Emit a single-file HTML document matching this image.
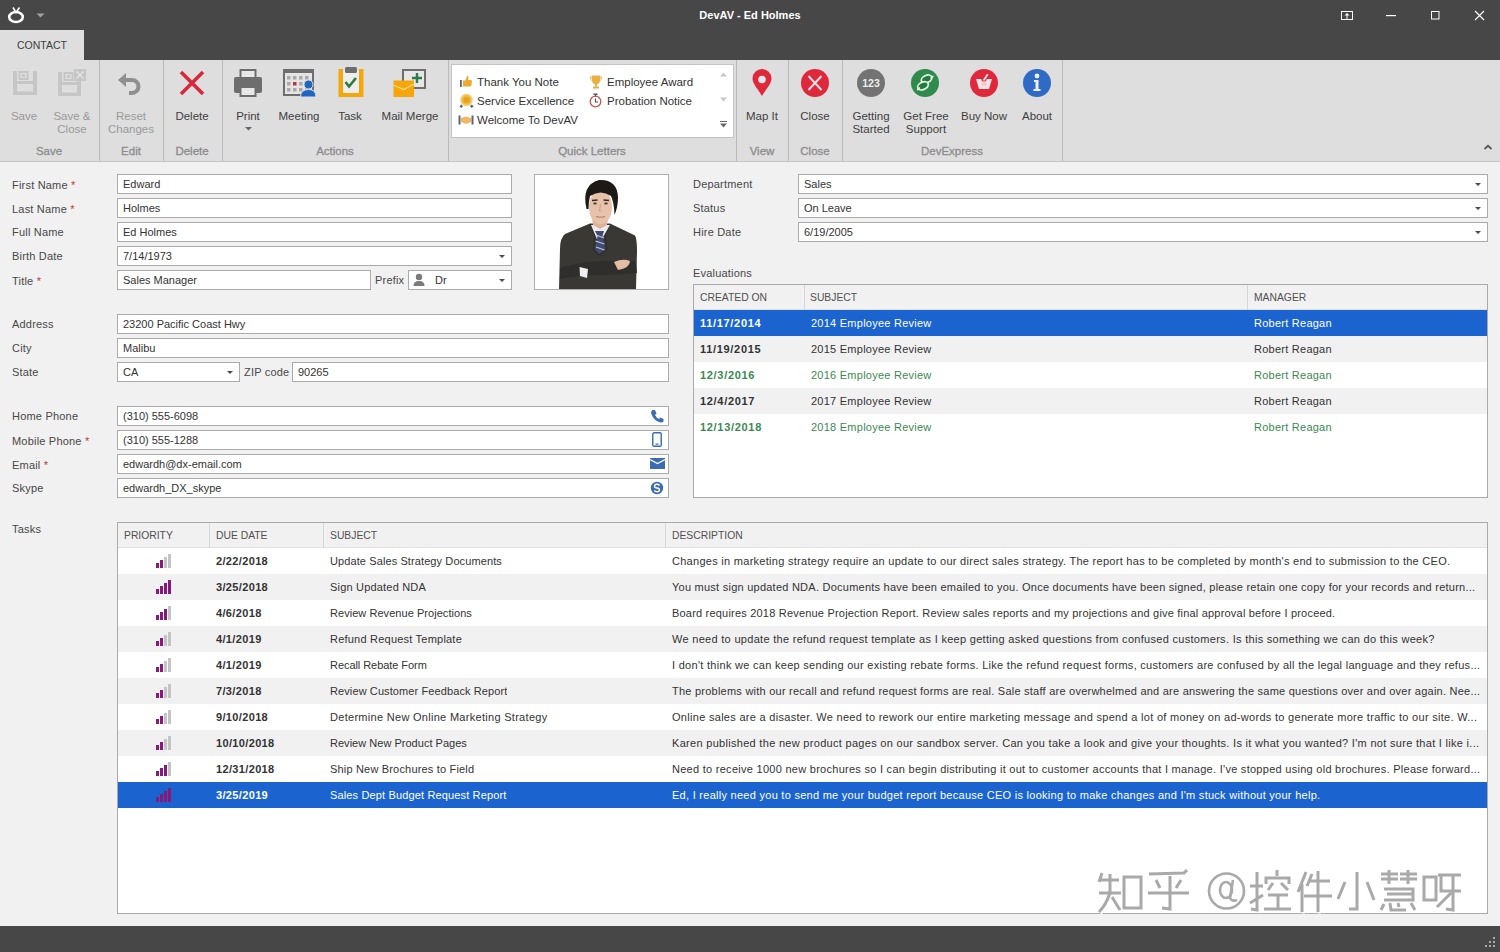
<!DOCTYPE html><html><head><meta charset="utf-8"><style>
*{margin:0;padding:0;box-sizing:border-box}
html,body{width:1500px;height:952px;overflow:hidden;background:#f1f1f1}
body{font-family:"Liberation Sans",sans-serif;font-size:11px;color:#333;position:relative}
.ab{position:absolute}
.t{position:absolute;white-space:nowrap;line-height:14px}
#title{left:0;top:0;width:1500px;height:30px;background:#474747}
#tabrow{left:0;top:30px;width:1500px;height:30px;background:#474747}
#tab{left:0;top:30px;width:84px;height:31px;background:#dedede}
#ribbon{left:0;top:60px;width:1500px;height:102px;background:#dedede;border-bottom:1px solid #c4c4c4}
.sep{position:absolute;top:60px;width:1px;height:101px;background:#bababa}
.rl{position:absolute;white-space:nowrap;line-height:13px;text-align:center;color:#404040;font-size:11.5px}
.rl.dis{color:#9a9a9a}
.gl{position:absolute;top:144px;white-space:nowrap;text-align:center;color:#8c8c8c;font-size:11.5px;line-height:14px;-webkit-text-stroke:0.3px #8c8c8c}
.fld{position:absolute;height:20px;background:#fff;border:1px solid #ababab}
.fld span{position:absolute;left:5px;top:2px;line-height:14px;white-space:nowrap;color:#333}
.lbl{position:absolute;left:12px;line-height:14px;white-space:nowrap;color:#484848;letter-spacing:0.2px}
.req{color:#c0392b}
.arr{position:absolute;width:0;height:0;border-left:3.5px solid transparent;border-right:3.5px solid transparent;border-top:3.5px solid #4a4a4a}
.grid{position:absolute;background:#fff;border:1px solid #aaa;overflow:hidden}
.gh{position:absolute;left:0;top:0;height:25px;background:#f1f1f1;border-bottom:1px solid #e0e0e0}
.hc{position:absolute;top:0;height:25px;line-height:24px;color:#505050;white-space:nowrap;transform:scaleX(0.94);transform-origin:0 0}
.hsep{position:absolute;top:0;width:1px;height:25px;background:#d6d6d6}
.row{position:absolute;left:0;height:26px}
.c{position:absolute;top:0;line-height:26px;white-space:nowrap;overflow:hidden;text-overflow:ellipsis;color:#333}
.b{font-weight:bold;letter-spacing:0.35px}
.ls{letter-spacing:0.25px}
.ld{letter-spacing:0.31px}
</style></head><body>
<div id="title" class="ab"></div><div id="tabrow" class="ab"></div><div id="tab" class="ab"></div>
<div class="t" style="left:0;top:8px;width:1500px;text-align:center;color:#fff;font-weight:bold;font-size:11px">DevAV - Ed Holmes</div>
<div class="t" style="left:17px;top:38px;color:#404040;font-size:10.5px">CONTACT</div>
<div id="ribbon" class="ab"></div>
<div class="sep" style="left:99px"></div>
<div class="sep" style="left:163px"></div>
<div class="sep" style="left:222px"></div>
<div class="sep" style="left:448px"></div>
<div class="sep" style="left:736px"></div>
<div class="sep" style="left:788px"></div>
<div class="sep" style="left:842px"></div>
<div class="sep" style="left:1062px"></div>
<div class="rl dis" style="left:-16.0px;top:110px;width:80px">Save</div>
<div class="rl dis" style="left:32.0px;top:110px;width:80px">Save &amp;</div>
<div class="rl dis" style="left:32.0px;top:123px;width:80px">Close</div>
<div class="rl dis" style="left:91.0px;top:110px;width:80px">Reset</div>
<div class="rl dis" style="left:91.0px;top:123px;width:80px">Changes</div>
<div class="rl " style="left:152.0px;top:110px;width:80px">Delete</div>
<div class="rl " style="left:208.0px;top:110px;width:80px">Print</div>
<div class="rl " style="left:259.0px;top:110px;width:80px">Meeting</div>
<div class="rl " style="left:310.0px;top:110px;width:80px">Task</div>
<div class="rl " style="left:370.0px;top:110px;width:80px">Mail Merge</div>
<div class="rl " style="left:722.0px;top:110px;width:80px">Map It</div>
<div class="rl " style="left:775.0px;top:110px;width:80px">Close</div>
<div class="rl " style="left:831.0px;top:110px;width:80px">Getting</div>
<div class="rl " style="left:831.0px;top:123px;width:80px">Started</div>
<div class="rl " style="left:886.0px;top:110px;width:80px">Get Free</div>
<div class="rl " style="left:886.0px;top:123px;width:80px">Support</div>
<div class="rl " style="left:944.0px;top:110px;width:80px">Buy Now</div>
<div class="rl " style="left:997.0px;top:110px;width:80px">About</div>
<div class="gl" style="left:-11.0px;width:120px">Save</div>
<div class="gl" style="left:71.0px;width:120px">Edit</div>
<div class="gl" style="left:132.0px;width:120px">Delete</div>
<div class="gl" style="left:275.0px;width:120px">Actions</div>
<div class="gl" style="left:532.0px;width:120px">Quick Letters</div>
<div class="gl" style="left:702.0px;width:120px">View</div>
<div class="gl" style="left:755.0px;width:120px">Close</div>
<div class="gl" style="left:892.0px;width:120px">DevExpress</div>
<div class="ab" style="left:451px;top:64px;width:283px;height:74px;background:#fff;border:1px solid #c4c4c4"></div>
<div class="t" style="left:477px;top:75px;color:#333;font-size:11.5px">Thank You Note</div>
<div class="t" style="left:477px;top:94px;color:#333;font-size:11.5px">Service Excellence</div>
<div class="t" style="left:477px;top:113px;color:#333;font-size:11.5px">Welcome To DevAV</div>
<div class="t" style="left:607px;top:75px;color:#333;font-size:11.5px">Employee Award</div>
<div class="t" style="left:607px;top:94px;color:#333;font-size:11.5px">Probation Notice</div>
<div class="lbl" style="left:12px;top:178px">First Name <span class="req">*</span></div>
<div class="fld" style="left:117px;top:174px;width:395px"><span>Edward</span></div>
<div class="lbl" style="left:12px;top:202px">Last Name <span class="req">*</span></div>
<div class="fld" style="left:117px;top:198px;width:395px"><span>Holmes</span></div>
<div class="lbl" style="left:12px;top:225px">Full Name</div>
<div class="fld" style="left:117px;top:222px;width:395px"><span>Ed Holmes</span></div>
<div class="lbl" style="left:12px;top:249px">Birth Date</div>
<div class="fld" style="left:117px;top:246px;width:395px"><span>7/14/1973</span></div>
<div class="arr" style="left:499px;top:255px"></div>
<div class="lbl" style="left:12px;top:274px">Title <span class="req">*</span></div>
<div class="fld" style="left:117px;top:270px;width:254px"><span>Sales Manager</span></div>
<div class="lbl" style="left:375px;top:273px">Prefix</div>
<div class="fld" style="left:408px;top:270px;width:104px"><span></span></div>
<div class="arr" style="left:499px;top:279px"></div>
<div class="t" style="left:435px;top:273px">Dr</div>
<div class="ab" style="left:534px;top:174px;width:135px;height:116px;background:#fff;border:1px solid #b0b0b0"></div>
<div class="lbl" style="left:12px;top:317px">Address</div>
<div class="fld" style="left:117px;top:314px;width:552px"><span>23200 Pacific Coast Hwy</span></div>
<div class="lbl" style="left:12px;top:341px">City</div>
<div class="fld" style="left:117px;top:338px;width:552px"><span>Malibu</span></div>
<div class="lbl" style="left:12px;top:365px">State</div>
<div class="fld" style="left:117px;top:362px;width:123px"><span>CA</span></div>
<div class="arr" style="left:227px;top:371px"></div>
<div class="lbl" style="left:244px;top:365px">ZIP code</div>
<div class="fld" style="left:292px;top:362px;width:377px"><span>90265</span></div>
<div class="lbl" style="left:12px;top:409px">Home Phone</div>
<div class="fld" style="left:117px;top:406px;width:552px"><span>(310) 555-6098</span></div>
<div class="lbl" style="left:12px;top:434px">Mobile Phone <span class="req">*</span></div>
<div class="fld" style="left:117px;top:430px;width:552px"><span>(310) 555-1288</span></div>
<div class="lbl" style="left:12px;top:458px">Email <span class="req">*</span></div>
<div class="fld" style="left:117px;top:454px;width:552px"><span>edwardh@dx-email.com</span></div>
<div class="lbl" style="left:12px;top:481px">Skype</div>
<div class="fld" style="left:117px;top:478px;width:552px"><span>edwardh_DX_skype</span></div>
<div class="lbl" style="left:12px;top:522px">Tasks</div>
<div class="lbl" style="left:693px;top:177px">Department</div>
<div class="fld" style="left:798px;top:174px;width:690px"><span>Sales</span></div>
<div class="arr" style="left:1475px;top:183px"></div>
<div class="lbl" style="left:693px;top:201px">Status</div>
<div class="fld" style="left:798px;top:198px;width:690px"><span>On Leave</span></div>
<div class="arr" style="left:1475px;top:207px"></div>
<div class="lbl" style="left:693px;top:225px">Hire Date</div>
<div class="fld" style="left:798px;top:222px;width:690px"><span>6/19/2005</span></div>
<div class="arr" style="left:1475px;top:231px"></div>
<div class="lbl" style="left:693px;top:266px">Evaluations</div>
<div class="grid" style="left:693px;top:284px;width:795px;height:214px">
<div class="gh" style="width:793px"></div>
<div class="hc" style="left:6px">CREATED ON</div><div class="hsep" style="left:110px"></div>
<div class="hc" style="left:116px">SUBJECT</div><div class="hsep" style="left:553px"></div>
<div class="hc" style="left:560px">MANAGER</div>
<div class="row" style="top:25px;width:793px;background:#1b64cf">
<div class="c b" style="left:6px;color:#fff;letter-spacing:0.69px">11/17/2014</div><div class="c ls" style="left:117px;color:#fff">2014 Employee Review</div><div class="c ls" style="left:560px;color:#fff">Robert Reagan</div>
</div>
<div class="row" style="top:51px;width:793px;background:#f1f1f1">
<div class="c b" style="left:6px;color:#333;letter-spacing:0.69px">11/19/2015</div><div class="c ls" style="left:117px;color:#333">2015 Employee Review</div><div class="c ls" style="left:560px;color:#333">Robert Reagan</div>
</div>
<div class="row" style="top:77px;width:793px;background:#fff">
<div class="c b" style="left:6px;color:#3b8a50;letter-spacing:0.69px">12/3/2016</div><div class="c ls" style="left:117px;color:#3b8a50">2016 Employee Review</div><div class="c ls" style="left:560px;color:#3b8a50">Robert Reagan</div>
</div>
<div class="row" style="top:103px;width:793px;background:#f1f1f1">
<div class="c b" style="left:6px;color:#333;letter-spacing:0.69px">12/4/2017</div><div class="c ls" style="left:117px;color:#333">2017 Employee Review</div><div class="c ls" style="left:560px;color:#333">Robert Reagan</div>
</div>
<div class="row" style="top:129px;width:793px;background:#fff">
<div class="c b" style="left:6px;color:#3b8a50;letter-spacing:0.69px">12/13/2018</div><div class="c ls" style="left:117px;color:#3b8a50">2018 Employee Review</div><div class="c ls" style="left:560px;color:#3b8a50">Robert Reagan</div>
</div>
</div>
<div class="grid" style="left:117px;top:522px;width:1371px;height:392px">
<div class="gh" style="width:1369px"></div>
<div class="hc" style="left:6px">PRIORITY</div><div class="hsep" style="left:91px"></div>
<div class="hc" style="left:98px">DUE DATE</div><div class="hsep" style="left:205px"></div>
<div class="hc" style="left:212px">SUBJECT</div><div class="hsep" style="left:547px"></div>
<div class="hc" style="left:554px">DESCRIPTION</div>
<div class="row" style="top:25px;width:1369px;background:#fff">
<div class="ab" style="left:38px;top:15px;width:3px;height:5px;background:#861a7a"></div><div class="ab" style="left:42px;top:12px;width:3px;height:8px;background:#861a7a"></div><div class="ab" style="left:46px;top:9px;width:3px;height:11px;background:#c4c4c4"></div><div class="ab" style="left:50px;top:6px;width:3px;height:14px;background:#c4c4c4"></div>
<div class="c b" style="left:98px;color:#333">2/22/2018</div><div class="c" style="left:212px;color:#333;letter-spacing:0.101px">Update Sales Strategy Documents</div><div class="c" style="left:554px;width:840px;color:#333;letter-spacing:0.28px">Changes in marketing strategy require an update to our direct sales strategy. The report has to be completed by month's end to submission to the CEO.</div>
</div>
<div class="row" style="top:51px;width:1369px;background:#f1f1f1">
<div class="ab" style="left:38px;top:15px;width:3px;height:5px;background:#861a7a"></div><div class="ab" style="left:42px;top:12px;width:3px;height:8px;background:#861a7a"></div><div class="ab" style="left:46px;top:9px;width:3px;height:11px;background:#861a7a"></div><div class="ab" style="left:50px;top:6px;width:3px;height:14px;background:#861a7a"></div>
<div class="c b" style="left:98px;color:#333">3/25/2018</div><div class="c" style="left:212px;color:#333;letter-spacing:0.19px">Sign Updated NDA</div><div class="c" style="left:554px;width:840px;color:#333;letter-spacing:0.244px">You must sign updated NDA. Documents have been emailed to you. Once documents have been signed, please retain one copy for your records and return...</div>
</div>
<div class="row" style="top:77px;width:1369px;background:#fff">
<div class="ab" style="left:38px;top:15px;width:3px;height:5px;background:#861a7a"></div><div class="ab" style="left:42px;top:12px;width:3px;height:8px;background:#861a7a"></div><div class="ab" style="left:46px;top:9px;width:3px;height:11px;background:#861a7a"></div><div class="ab" style="left:50px;top:6px;width:3px;height:14px;background:#c4c4c4"></div>
<div class="c b" style="left:98px;color:#333">4/6/2018</div><div class="c" style="left:212px;color:#333;letter-spacing:0.048px">Review Revenue Projections</div><div class="c" style="left:554px;width:840px;color:#333;letter-spacing:0.2px">Board requires 2018 Revenue Projection Report. Review sales reports and my projections and give final approval before I proceed.</div>
</div>
<div class="row" style="top:103px;width:1369px;background:#f1f1f1">
<div class="ab" style="left:38px;top:15px;width:3px;height:5px;background:#861a7a"></div><div class="ab" style="left:42px;top:12px;width:3px;height:8px;background:#861a7a"></div><div class="ab" style="left:46px;top:9px;width:3px;height:11px;background:#c4c4c4"></div><div class="ab" style="left:50px;top:6px;width:3px;height:14px;background:#c4c4c4"></div>
<div class="c b" style="left:98px;color:#333">4/1/2019</div><div class="c" style="left:212px;color:#333;letter-spacing:0.217px">Refund Request Template</div><div class="c" style="left:554px;width:840px;color:#333;letter-spacing:0.298px">We need to update the refund request template as I keep getting asked questions from confused customers. Is this something we can do this week?</div>
</div>
<div class="row" style="top:129px;width:1369px;background:#fff">
<div class="ab" style="left:38px;top:15px;width:3px;height:5px;background:#861a7a"></div><div class="ab" style="left:42px;top:12px;width:3px;height:8px;background:#861a7a"></div><div class="ab" style="left:46px;top:9px;width:3px;height:11px;background:#c4c4c4"></div><div class="ab" style="left:50px;top:6px;width:3px;height:14px;background:#c4c4c4"></div>
<div class="c b" style="left:98px;color:#333">4/1/2019</div><div class="c" style="left:212px;color:#333;letter-spacing:-0.057px">Recall Rebate Form</div><div class="c" style="left:554px;width:840px;color:#333;letter-spacing:0.289px">I don't think we can keep sending our existing rebate forms. Like the refund request forms, customers are confused by all the legal language and they refus...</div>
</div>
<div class="row" style="top:155px;width:1369px;background:#f1f1f1">
<div class="ab" style="left:38px;top:15px;width:3px;height:5px;background:#861a7a"></div><div class="ab" style="left:42px;top:12px;width:3px;height:8px;background:#861a7a"></div><div class="ab" style="left:46px;top:9px;width:3px;height:11px;background:#c4c4c4"></div><div class="ab" style="left:50px;top:6px;width:3px;height:14px;background:#c4c4c4"></div>
<div class="c b" style="left:98px;color:#333">7/3/2018</div><div class="c" style="left:212px;color:#333;letter-spacing:0.102px">Review Customer Feedback Report</div><div class="c" style="left:554px;width:840px;color:#333;letter-spacing:0.238px">The problems with our recall and refund request forms are real. Sale staff are overwhelmed and are answering the same questions over and over again. Nee...</div>
</div>
<div class="row" style="top:181px;width:1369px;background:#fff">
<div class="ab" style="left:38px;top:15px;width:3px;height:5px;background:#861a7a"></div><div class="ab" style="left:42px;top:12px;width:3px;height:8px;background:#861a7a"></div><div class="ab" style="left:46px;top:9px;width:3px;height:11px;background:#c4c4c4"></div><div class="ab" style="left:50px;top:6px;width:3px;height:14px;background:#c4c4c4"></div>
<div class="c b" style="left:98px;color:#333">9/10/2018</div><div class="c" style="left:212px;color:#333;letter-spacing:0.294px">Determine New Online Marketing Strategy</div><div class="c" style="left:554px;width:840px;color:#333;letter-spacing:0.295px">Online sales are a disaster. We need to rework our entire marketing message and spend a lot of money on ad-words to generate more traffic to our site. W...</div>
</div>
<div class="row" style="top:207px;width:1369px;background:#f1f1f1">
<div class="ab" style="left:38px;top:15px;width:3px;height:5px;background:#861a7a"></div><div class="ab" style="left:42px;top:12px;width:3px;height:8px;background:#861a7a"></div><div class="ab" style="left:46px;top:9px;width:3px;height:11px;background:#c4c4c4"></div><div class="ab" style="left:50px;top:6px;width:3px;height:14px;background:#c4c4c4"></div>
<div class="c b" style="left:98px;color:#333">10/10/2018</div><div class="c" style="left:212px;color:#333;letter-spacing:0.023px">Review New Product Pages</div><div class="c" style="left:554px;width:840px;color:#333;letter-spacing:0.3px">Karen published the new product pages on our sandbox server. Can you take a look and give your thoughts. Is it what you wanted? I'm not sure that I like i...</div>
</div>
<div class="row" style="top:233px;width:1369px;background:#fff">
<div class="ab" style="left:38px;top:15px;width:3px;height:5px;background:#861a7a"></div><div class="ab" style="left:42px;top:12px;width:3px;height:8px;background:#861a7a"></div><div class="ab" style="left:46px;top:9px;width:3px;height:11px;background:#861a7a"></div><div class="ab" style="left:50px;top:6px;width:3px;height:14px;background:#c4c4c4"></div>
<div class="c b" style="left:98px;color:#333">12/31/2018</div><div class="c" style="left:212px;color:#333;letter-spacing:0.181px">Ship New Brochures to Field</div><div class="c" style="left:554px;width:840px;color:#333;letter-spacing:0.275px">Need to receive 1000 new brochures so I can begin distributing it out to customer accounts that I manage. I've stopped using old brochures. Please forward...</div>
</div>
<div class="row" style="top:259px;width:1369px;background:#1b64cf">
<div class="ab" style="left:38px;top:15px;width:3px;height:5px;background:#861a7a"></div><div class="ab" style="left:42px;top:12px;width:3px;height:8px;background:#861a7a"></div><div class="ab" style="left:46px;top:9px;width:3px;height:11px;background:#861a7a"></div><div class="ab" style="left:50px;top:6px;width:3px;height:14px;background:#861a7a"></div>
<div class="c b" style="left:98px;color:#fff">3/25/2019</div><div class="c" style="left:212px;color:#fff;letter-spacing:0.146px">Sales Dept Budget Request Report</div><div class="c" style="left:554px;width:840px;color:#fff;letter-spacing:0.273px">Ed, I really need you to send me your budget report because CEO is looking to make changes and I'm stuck without your help.</div>
</div>
</div>
<svg class="ab" style="left:6px;top:5px" width="20" height="20" viewBox="0 0 20 20"><ellipse cx="10" cy="12" rx="6.8" ry="5" fill="none" stroke="#fff" stroke-width="2.6"/><path d="M7 2.5 L10 7.5 L13.5 2.5" fill="none" stroke="#fff" stroke-width="1.6"/></svg>
<svg class="ab" style="left:36px;top:13px" width="9" height="5" viewBox="0 0 9 5"><path d="M0.5 0.5 L8.5 0.5 L4.5 4.5Z" fill="#a0a0a0"/></svg>
<svg class="ab" style="left:1340px;top:10px" width="14" height="11" viewBox="0 0 14 11"><rect x="1.5" y="1.5" width="11" height="8" fill="none" stroke="#fff" stroke-width="1"/><path d="M7 3 L4.5 5.5 H6.5 V9 H7.5 V5.5 H9.5Z" fill="#fff"/></svg>
<svg class="ab" style="left:1386px;top:15px" width="10" height="2" viewBox="0 0 10 2"><rect x="0" y="0" width="10" height="1.2" fill="#fff"/></svg>
<svg class="ab" style="left:1430px;top:10px" width="10" height="10" viewBox="0 0 10 10"><rect x="1.5" y="1.5" width="7.5" height="7.5" fill="none" stroke="#fff" stroke-width="1"/></svg>
<svg class="ab" style="left:1474px;top:10px" width="11" height="11" viewBox="0 0 11 11"><path d="M1 1 L10 10 M10 1 L1 10" stroke="#fff" stroke-width="1.2"/></svg>
<svg class="ab" style="left:1483px;top:144px" width="10" height="6" viewBox="0 0 10 6"><path d="M1.5 5 L5 1.8 L8.5 5" fill="none" stroke="#5a5a5a" stroke-width="1.8"/></svg>
<svg class="ab" style="left:13px;top:71px" width="24" height="24" viewBox="0 0 24 24"><rect x="0" y="0" width="4" height="24" fill="#c6c6c6"/><rect x="20" y="0" width="4" height="24" fill="#c6c6c6"/><rect x="0" y="10" width="24" height="3" fill="#c6c6c6"/><rect x="0" y="20.5" width="24" height="3.5" fill="#c6c6c6"/><rect x="6.5" y="1" width="8" height="7" fill="none" stroke="#c6c6c6" stroke-width="2"/><rect x="9" y="3" width="3" height="3" fill="#c6c6c6"/></svg>
<svg class="ab" style="left:58px;top:69px" width="29" height="28" viewBox="0 0 29 28"><g transform="translate(0,3)"><rect x="0" y="0" width="4" height="24" fill="#c6c6c6"/><rect x="19" y="8" width="4" height="16" fill="#c6c6c6"/><rect x="0" y="10" width="23" height="3" fill="#c6c6c6"/><rect x="0" y="20.5" width="23" height="3.5" fill="#c6c6c6"/><rect x="6.5" y="1" width="8" height="7" fill="none" stroke="#c6c6c6" stroke-width="2"/><rect x="9" y="3" width="3" height="3" fill="#c6c6c6"/></g><rect x="16" y="0" width="12" height="12" fill="#c6c6c6"/><path d="M18.5 2.5 L25.5 9.5 M25.5 2.5 L18.5 9.5" stroke="#e4e4e4" stroke-width="1.3"/></svg>
<svg class="ab" style="left:117px;top:71px" width="27" height="25" viewBox="0 0 27 25"><path d="M3 9 H15 A6.5 6.5 0 0 1 15 22 H12" fill="none" stroke="#8f8f8f" stroke-width="4"/><path d="M1 9 L9 2 V16Z" fill="#8f8f8f"/></svg>
<svg class="ab" style="left:179px;top:70px" width="26" height="26" viewBox="0 0 26 26"><path d="M2 2 L24 24 M24 2 L2 24" stroke="#d8283c" stroke-width="3.6"/></svg>
<svg class="ab" style="left:234px;top:69px" width="28" height="28" viewBox="0 0 28 28"><rect x="6.5" y="1" width="15" height="10" fill="#e8e8e8" stroke="#6e6e6e" stroke-width="2"/><path d="M2 8 H26 A2 2 0 0 1 28 10 V22 A2 2 0 0 1 26 24 H2 A2 2 0 0 1 0 22 V10 A2 2 0 0 1 2 8Z" fill="#6e6e6e"/><rect x="6.5" y="18" width="15" height="9" fill="#e8e8e8" stroke="#6e6e6e" stroke-width="2"/></svg>
<svg class="ab" style="left:245px;top:127px" width="7" height="4" viewBox="0 0 7 4"><path d="M0 0 H7 L3.5 3.5Z" fill="#666"/></svg>
<svg class="ab" style="left:283px;top:69px" width="33" height="28" viewBox="0 0 33 28"><rect x="1" y="1" width="29" height="25" fill="#e4e4e4" stroke="#6e6e6e" stroke-width="2"/><rect x="0" y="0" width="31" height="4" fill="#6e6e6e"/><rect x="4" y="7" width="3.5" height="3.5" fill="#a8a8a8"/><rect x="10" y="7" width="3.5" height="3.5" fill="#a8a8a8"/><rect x="16" y="7" width="3.5" height="3.5" fill="#a8a8a8"/><rect x="22" y="7" width="3.5" height="3.5" fill="#a8a8a8"/><rect x="4" y="13" width="3.5" height="3.5" fill="#a8a8a8"/><rect x="10" y="13" width="3.5" height="3.5" fill="#c03040"/><rect x="16" y="13" width="3.5" height="3.5" fill="#a8a8a8"/><rect x="22" y="13" width="3.5" height="3.5" fill="#a8a8a8"/><rect x="4" y="19" width="3.5" height="3.5" fill="#a8a8a8"/><rect x="10" y="19" width="3.5" height="3.5" fill="#a8a8a8"/><rect x="16" y="19" width="3.5" height="3.5" fill="#a8a8a8"/><rect x="22" y="19" width="3.5" height="3.5" fill="#a8a8a8"/><circle cx="25.5" cy="15.5" r="4.5" fill="#1f66c0" stroke="#dedede" stroke-width="1"/><path d="M17.5 28 Q17.5 20.5 25.5 20.5 Q33 20.5 33 28Z" fill="#1f66c0" stroke="#dedede" stroke-width="1"/></svg>
<svg class="ab" style="left:338px;top:67px" width="26" height="30" viewBox="0 0 26 30"><path d="M0.5 2 H5 V26 H21 V2 H25.5 V30 H0.5Z" fill="#f5a60a"/><rect x="5" y="3" width="16" height="23" fill="#eeeeee"/><rect x="7" y="0" width="12" height="6" rx="1.5" fill="#6e6e6e"/><path d="M7.5 15 L11 19.5 L18 11" fill="none" stroke="#2e7a3c" stroke-width="2.6"/></svg>
<svg class="ab" style="left:393px;top:69px" width="34" height="28" viewBox="0 0 34 28"><rect x="10" y="1" width="22" height="18" fill="#e6e6e6" stroke="#6e6e6e" stroke-width="2"/><path d="M24 4 V14 M19 9 H29" stroke="#2e7a4a" stroke-width="2.4"/><rect x="0.5" y="11.5" width="20.5" height="16.5" fill="#f5a60a"/><path d="M0.5 16 L10.7 20.5 L21 15" fill="none" stroke="#ffd98a" stroke-width="1.3"/></svg>
<svg class="ab" style="left:752px;top:68px" width="20" height="29" viewBox="0 0 20 29"><path d="M10 1 A9.5 9.5 0 0 1 19.5 10.5 C19.5 16 14 21 10 28 C6 21 0.5 16 0.5 10.5 A9.5 9.5 0 0 1 10 1Z" fill="#e0283c"/><circle cx="10" cy="11.5" r="3.8" fill="#e6e6e6"/></svg>
<svg class="ab" style="left:801px;top:69px" width="28" height="28" viewBox="0 0 28 28"><circle cx="14" cy="14" r="14" fill="#e0283c"/><path d="M7.5 7 L20.5 21 M20.5 7 L7.5 21" stroke="#f4e0e0" stroke-width="2"/></svg>
<svg class="ab" style="left:857px;top:69px" width="28" height="28" viewBox="0 0 28 28"><circle cx="14" cy="14" r="14" fill="#737373"/><text x="14" y="18" text-anchor="middle" font-family="Liberation Sans" font-weight="bold" font-size="10.5" fill="#eee">123</text></svg>
<svg class="ab" style="left:911px;top:69px" width="28" height="28" viewBox="0 0 28 28"><circle cx="14" cy="14" r="14" fill="#2f8a4c"/><ellipse cx="15.6" cy="10" rx="5.6" ry="3.6" fill="#247a3e" stroke="#e0f2e4" stroke-width="1.8" transform="rotate(-25 15.6 10)"/><ellipse cx="12" cy="16.8" rx="5.6" ry="3.6" fill="#247a3e" stroke="#e0f2e4" stroke-width="1.8" transform="rotate(-25 12 16.8)"/><path d="M6.2 21.2 L9 18.5 M19.5 9.5 L22.5 7" stroke="#e0f2e4" stroke-width="1.6"/></svg>
<svg class="ab" style="left:970px;top:69px" width="28" height="28" viewBox="0 0 28 28"><circle cx="14" cy="14" r="14" fill="#e0283c"/><path d="M6 10 H22 L19 20 H9Z" fill="#f4e4e6"/><circle cx="14" cy="10" r="2.6" fill="#e0283c"/><path d="M13.5 11.5 L17.8 5.2" stroke="#f4e4e6" stroke-width="1.8"/><rect x="11.5" y="13.5" width="5" height="3" fill="#f0c8cc"/></svg>
<svg class="ab" style="left:1023px;top:69px" width="28" height="28" viewBox="0 0 28 28"><circle cx="14" cy="14" r="14" fill="#2f6bc4"/><circle cx="14" cy="7" r="2.4" fill="#eef"/><path d="M11 11 H15.5 V20 H17.5 V22 H10.5 V20 H12.5 V13 H11Z" fill="#eef"/></svg>
<svg class="ab" style="left:459px;top:75px" width="14" height="12" viewBox="0 0 14 12"><rect x="1" y="5" width="1.8" height="7" fill="#5a6670"/><path d="M4 5.5 L6.5 5.5 L8 1 Q9.5 0.5 9.5 2.5 L9 5 H12 Q13 5 13 6.5 L12.3 10.5 Q12 11.5 11 11.5 H4Z" fill="#f0a830"/></svg>
<svg class="ab" style="left:459px;top:93px" width="15" height="16" viewBox="0 0 15 16"><circle cx="7.5" cy="7" r="5.5" fill="#f0b840" stroke="#f5d070" stroke-width="1.5"/><circle cx="7.5" cy="7" r="3" fill="#e8a020"/><rect x="1" y="12" width="2.5" height="2.5" fill="#4a6080" transform="rotate(45 2.25 13.25)"/><rect x="11.5" y="12" width="2.5" height="2.5" fill="#4a6080" transform="rotate(45 12.75 13.25)"/></svg>
<svg class="ab" style="left:458px;top:115px" width="16" height="10" viewBox="0 0 16 10"><rect x="0.5" y="0.5" width="2" height="9" fill="#5a6670"/><rect x="13.5" y="0.5" width="2" height="9" fill="#5a6670"/><path d="M3 3 L8 1.5 L13 3 V7 L8 9 L3 7Z" fill="#f0b860"/></svg>
<svg class="ab" style="left:590px;top:75px" width="12" height="14" viewBox="0 0 12 14"><path d="M2 0.5 H10 V5 Q10 9 6 9.5 Q2 9 2 5Z" fill="#e8b040"/><path d="M2 2 H0.5 Q0.5 5 2.5 6 M10 2 H11.5 Q11.5 5 9.5 6" fill="none" stroke="#e8b040" stroke-width="1"/><rect x="5" y="9" width="2" height="2.5" fill="#e8b040"/><rect x="3" y="11.5" width="6" height="2" fill="#e8b040"/></svg>
<svg class="ab" style="left:589px;top:93px" width="13" height="15" viewBox="0 0 13 15"><circle cx="6.5" cy="8.5" r="5.3" fill="none" stroke="#d05050" stroke-width="1.3"/><path d="M6.5 5.5 V9 H9" fill="none" stroke="#555" stroke-width="1.2"/><rect x="4.5" y="0.5" width="4" height="1.5" fill="#555"/><rect x="6" y="1.5" width="1" height="2" fill="#555"/></svg>
<svg class="ab" style="left:720px;top:72px" width="7" height="5" viewBox="0 0 7 5"><path d="M0 4.5 L3.5 0.5 L7 4.5Z" fill="#c8c8c8"/></svg>
<svg class="ab" style="left:720px;top:97px" width="7" height="5" viewBox="0 0 7 5"><path d="M0 0.5 L3.5 4.5 L7 0.5Z" fill="#c8c8c8"/></svg>
<svg class="ab" style="left:720px;top:121px" width="7" height="7" viewBox="0 0 7 7"><rect x="0" y="0" width="7" height="1" fill="#666"/><path d="M0 2.5 L3.5 6.5 L7 2.5Z" fill="#666"/></svg>
<svg class="ab" style="left:650px;top:409px" width="14" height="14" viewBox="0 0 14 14"><path d="M2.5 1 L5 1 L6.5 4.5 L5 6 Q6.5 9 9 10 L10.5 8.5 L13.5 10 V12.5 Q12.5 13.5 11 13.5 Q4 12.5 1 4 Q1 2 2.5 1Z" fill="#3b6bb0"/></svg>
<svg class="ab" style="left:652px;top:432px" width="10" height="15" viewBox="0 0 10 15"><rect x="0.8" y="0.8" width="8.4" height="13.4" rx="1.2" fill="#fff" stroke="#3b6bb0" stroke-width="1.4"/><rect x="3.5" y="11.5" width="3" height="1.2" fill="#3b6bb0"/></svg>
<svg class="ab" style="left:650px;top:458px" width="15" height="11" viewBox="0 0 15 11"><rect x="0" y="0" width="15" height="11" fill="#3b6bb0"/><path d="M0 1.5 L7.5 5.5 L15 1.5" fill="none" stroke="#fff" stroke-width="1.3"/></svg>
<svg class="ab" style="left:650px;top:481px" width="14" height="14" viewBox="0 0 14 14"><circle cx="7" cy="7" r="6.2" fill="#3b6bb0"/><path d="M9.5 4.5 Q8.5 3.3 7 3.3 Q4.5 3.3 4.5 5.2 Q4.5 6.7 7 7 Q9.5 7.3 9.5 9 Q9.5 10.7 7 10.7 Q5.2 10.7 4.3 9.5" fill="none" stroke="#fff" stroke-width="1.4"/></svg>
<svg class="ab" style="left:413px;top:273px" width="12" height="13" viewBox="0 0 12 13"><circle cx="6" cy="4" r="3.2" fill="#7a7a7a"/><path d="M0.5 13 Q0.5 8 6 8 Q11.5 8 11.5 13Z" fill="#7a7a7a"/></svg>
<svg class="ab" style="left:535px;top:175px" width="133" height="114" viewBox="0 0 133 114"><path d="M24 114 L25 74 Q25 63 30 59 L55 48.5 L75 48.5 L100 60.5 Q102 64 102 76 L101 114Z" fill="#393835"/><path d="M55 49 L60 61 L58 75 L64 80 M75 49 L70 61 L72 75 L64 80" fill="none" stroke="#2c2b29" stroke-width="1"/><path d="M56 50 L75 50 L64 69Z" fill="#ececec"/><path d="M60 56 L69 56 L67.5 61 L70 74 L64.5 79 L60 74 L62.5 61Z" fill="#414a72"/><path d="M61 60 L69 63 M60.5 66 L69.5 69 M61 72 L69.5 75" stroke="#c0c6dc" stroke-width="1.1"/><path d="M57 42 L73 42 L72 50 L65 54 L58 50Z" fill="#dcb29a"/><ellipse cx="65.5" cy="32" rx="11.5" ry="17.5" fill="#e6c2aa"/><path d="M57 25.5 L62.5 25 M68.5 25 L74 25.5" stroke="#3a2a22" stroke-width="1.3"/><ellipse cx="60" cy="28.5" rx="1.8" ry="1" fill="#4a3a32"/><ellipse cx="71" cy="28.5" rx="1.8" ry="1" fill="#4a3a32"/><path d="M65.5 29 L64.5 36 L66.5 36.5" stroke="#c89a86" stroke-width="0.9" fill="none"/><path d="M61 41.5 Q65.5 43 70 41.5" stroke="#b07a6a" stroke-width="1.2" fill="none"/><path d="M51.5 34 Q46 10 64 5 Q82 4 83 22 Q83 32 79.5 40 Q79 27 76 21 Q66 14 55 21 Q53.5 27 53.5 34Z" fill="#1c1917"/><path d="M25 93 Q50 85 79 86 L101 86 L102 98 Q70 101 50 100 L25 104Z" fill="#2f2e2c"/><path d="M79 87 Q88 83 95 86 Q95 93 83 95Z" fill="#e2bca4"/><path d="M44.5 92 L53 94 L52 103 L45 101Z" fill="#efefef"/></svg>
<svg class="ab" style="left:0;top:0" width="1500" height="952"><path d="M1102 873 L1099 882 M1100 880 L1119 880 M1099 893 L1121 893 M1110 874 L1110 893 Q1106 905 1099 912 M1112 897 L1120 910 M1124 877 L1141 877 L1141 908 L1124 908Z M1124 877 L1124 908" fill="none" stroke="#ffffff" stroke-width="3" transform="translate(1.5,1.5)"/><path d="M1149 874 L1184 873 L1187 870 M1156 880 L1160 888 M1181 880 L1176 888 M1148 893 L1189 893 M1170 876 L1170 909 L1162 908" fill="none" stroke="#ffffff" stroke-width="3" transform="translate(1.5,1.5)"/><path d="M1250 886 L1263 886 M1257 872 L1257 910 L1251 909 M1250 903 L1263 895 M1277 870 L1277 876 M1266 884 L1266 878 L1289 878 L1289 884 M1273 883 L1268 890 M1281 883 L1288 890 M1268 895 L1288 895 M1278 895 L1278 909 M1264 909 L1291 909" fill="none" stroke="#ffffff" stroke-width="3" transform="translate(1.5,1.5)"/><path d="M1306 872 L1298 892 M1302 884 L1302 912 M1312 874 L1307 886 M1309 881 L1330 881 M1318 871 L1318 912 M1304 896 L1332 896" fill="none" stroke="#ffffff" stroke-width="3" transform="translate(1.5,1.5)"/><path d="M1357 872 L1357 909 L1349 909 M1345 882 L1338 899 M1367 882 L1374 900" fill="none" stroke="#ffffff" stroke-width="3" transform="translate(1.5,1.5)"/><path d="M1381 874 L1398 874 M1381 879 L1398 879 M1389 870 L1389 884 M1400 874 L1417 874 M1400 879 L1417 879 M1408 870 L1408 884 M1384 889 L1413 889 L1413 900 L1384 900 M1387 894 L1413 894 M1384 904 L1381 910 M1390 903 L1391 910 L1406 910 M1398 903 L1399 907 M1411 903 L1415 910" fill="none" stroke="#ffffff" stroke-width="3" transform="translate(1.5,1.5)"/><path d="M1424 877 L1436 877 L1436 900 L1424 900Z M1438 875 L1461 875 M1441 876 L1441 891 L1461 891 M1453 875 L1453 910 L1446 909 M1451 893 L1437 907" fill="none" stroke="#ffffff" stroke-width="3" transform="translate(1.5,1.5)"/><path d="M1102 873 L1099 882 M1100 880 L1119 880 M1099 893 L1121 893 M1110 874 L1110 893 Q1106 905 1099 912 M1112 897 L1120 910 M1124 877 L1141 877 L1141 908 L1124 908Z M1124 877 L1124 908" fill="none" stroke="#a9a9a9" stroke-width="3"/><path d="M1149 874 L1184 873 L1187 870 M1156 880 L1160 888 M1181 880 L1176 888 M1148 893 L1189 893 M1170 876 L1170 909 L1162 908" fill="none" stroke="#a9a9a9" stroke-width="3"/><path d="M1250 886 L1263 886 M1257 872 L1257 910 L1251 909 M1250 903 L1263 895 M1277 870 L1277 876 M1266 884 L1266 878 L1289 878 L1289 884 M1273 883 L1268 890 M1281 883 L1288 890 M1268 895 L1288 895 M1278 895 L1278 909 M1264 909 L1291 909" fill="none" stroke="#a9a9a9" stroke-width="3"/><path d="M1306 872 L1298 892 M1302 884 L1302 912 M1312 874 L1307 886 M1309 881 L1330 881 M1318 871 L1318 912 M1304 896 L1332 896" fill="none" stroke="#a9a9a9" stroke-width="3"/><path d="M1357 872 L1357 909 L1349 909 M1345 882 L1338 899 M1367 882 L1374 900" fill="none" stroke="#a9a9a9" stroke-width="3"/><path d="M1381 874 L1398 874 M1381 879 L1398 879 M1389 870 L1389 884 M1400 874 L1417 874 M1400 879 L1417 879 M1408 870 L1408 884 M1384 889 L1413 889 L1413 900 L1384 900 M1387 894 L1413 894 M1384 904 L1381 910 M1390 903 L1391 910 L1406 910 M1398 903 L1399 907 M1411 903 L1415 910" fill="none" stroke="#a9a9a9" stroke-width="3"/><path d="M1424 877 L1436 877 L1436 900 L1424 900Z M1438 875 L1461 875 M1441 876 L1441 891 L1461 891 M1453 875 L1453 910 L1446 909 M1451 893 L1437 907" fill="none" stroke="#a9a9a9" stroke-width="3"/><circle cx="1226.5" cy="891" r="17.5" fill="none" stroke="#a9a9a9" stroke-width="2.6"/><ellipse cx="1226" cy="890" rx="6" ry="8" fill="none" stroke="#a9a9a9" stroke-width="2.6"/><path d="M1233 880 L1230 898 Q1232 902 1237 900" fill="none" stroke="#a9a9a9" stroke-width="2.6"/></svg>
<div class="ab" style="left:0;top:926px;width:1500px;height:26px;background:#474747"></div>
<div class="ab" style="left:1493px;top:937px;width:2px;height:2px;background:#aaa"></div>
<div class="ab" style="left:1489px;top:941px;width:2px;height:2px;background:#aaa"></div>
<div class="ab" style="left:1493px;top:941px;width:2px;height:2px;background:#aaa"></div>
<div class="ab" style="left:1485px;top:945px;width:2px;height:2px;background:#aaa"></div>
<div class="ab" style="left:1489px;top:945px;width:2px;height:2px;background:#aaa"></div>
<div class="ab" style="left:1493px;top:945px;width:2px;height:2px;background:#aaa"></div>
</body></html>
